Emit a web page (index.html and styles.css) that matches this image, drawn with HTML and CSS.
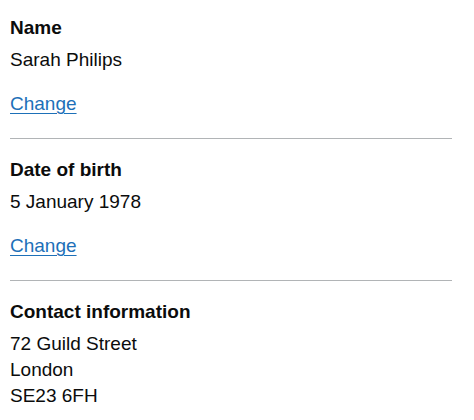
FILE: index.html
```html
<!DOCTYPE html>
<html lang="en">
<head>
<meta charset="utf-8">
<title>Summary list</title>
<link rel="stylesheet" href="styles.css">
</head>
<body>
<div class="container">
  <dl class="summary-list">
    <div class="summary-row">
      <dt class="summary-key">Name</dt>
      <dd class="summary-value">Sarah Philips</dd>
      <dd class="summary-actions"><a class="link" href="#">Change</a></dd>
    </div>
    <div class="summary-row">
      <dt class="summary-key">Date of birth</dt>
      <dd class="summary-value">5 January 1978</dd>
      <dd class="summary-actions"><a class="link" href="#">Change</a></dd>
    </div>
    <div class="summary-row summary-row--last">
      <dt class="summary-key">Contact information</dt>
      <dd class="summary-value">72 Guild Street<br>London<br>SE23 6FH</dd>
    </div>
  </dl>
</div>
</body>
</html>
```
FILE: styles.css
```css
html, body {
  margin: 0;
  padding: 0;
  background: #ffffff;
}
body {
  font-family: "Liberation Sans", Arial, sans-serif;
  font-size: 19px;
  line-height: 26px;
  color: #0b0c0c;
}
.container {
  padding: 15px 22px 0 10px;
}
.summary-list {
  margin: 0;
  display: flex;
  flex-direction: column;
}
.summary-row {
  display: flex;
  flex-direction: column;
  padding-bottom: 21px;
  margin-bottom: 18px;
  border-bottom: 1px solid #b1b4b6;
}
.summary-row--last {
  border-bottom: none;
  margin-bottom: 0;
}
.summary-key {
  margin: 0;
  font-weight: 700;
}
.summary-value {
  margin: 6px 0 0 0;
}
.summary-actions {
  margin: 18px 0 0 0;
}
.link {
  color: #1d70b8;
  text-decoration: underline;
  text-decoration-thickness: 1px;
  text-underline-offset: 3px;
}
```
